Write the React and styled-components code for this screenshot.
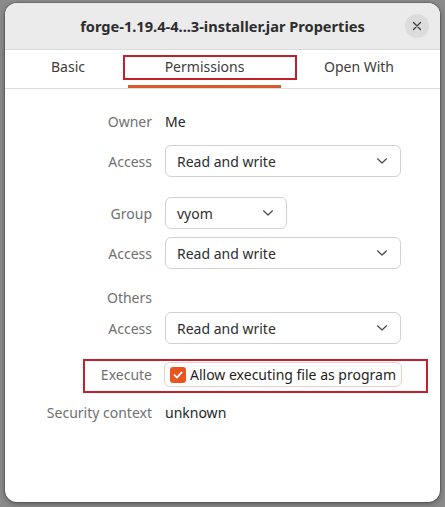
import React, { useState } from 'react';
import styled, { createGlobalStyle } from 'styled-components';

const GlobalStyle = createGlobalStyle`
    html, body {
        margin: 0;
        padding: 0;
        background: #8b8b8b;
        font-family: "Noto Sans", "Open Sans", sans-serif;
    }
`;

const Desktop = styled.div`
    width: 445px;
    height: 507px;
    padding: 3px 5px 5px 5px;
    box-sizing: border-box;
`;

const Window = styled.div`
    width: 435px;
    height: 499px;
    background: #ffffff;
    border-radius: 12px;
    overflow: hidden;
    display: flex;
    flex-direction: column;
    box-shadow: 0 0 0 1px rgba(0, 0, 0, 0.18), 0 2px 6px rgba(0, 0, 0, 0.35);
`;

const HeaderBar = styled.div`
    height: 46px;
    flex: none;
    background: #ebebeb;
    border-bottom: 1px solid #d9d9d9;
    display: grid;
    grid-template-columns: 1fr auto 1fr;
    align-items: center;
`;

const Title = styled.div`
    grid-column: 2;
    font-size: 14.6px;
    font-weight: 700;
    color: #2d2d2d;
`;

const CloseButton = styled.button`
    grid-column: 3;
    justify-self: end;
    margin-right: 11px;
    width: 24px;
    height: 24px;
    border-radius: 50%;
    border: none;
    background: #dcdcdc;
    color: #3a3a3a;
    display: flex;
    align-items: center;
    justify-content: center;
    padding: 0;
`;

const TabBar = styled.div`
    height: 38px;
    flex: none;
    border-bottom: 1px solid #dddddd;
    display: grid;
    grid-template-columns: 108px 153px 144px;
    column-gap: 6px;
    padding-left: 9px;
`;

const Tab = styled.div`
    position: relative;
    display: flex;
    align-items: center;
    justify-content: center;
    font-size: 14px;
    color: #3c3c3c;
    padding-bottom: 2px;

    &::before {
        content: '';
        position: absolute;
        left: 0;
        right: 0;
        bottom: 0;
        height: 3px;
        background: ${p => (p.$active ? '#d45a2a' : 'transparent')};
    }
`;

/* red annotation frame drawn over the selected tab */
const TabMark = styled.span`
    position: absolute;
    left: -5px;
    right: -16px;
    top: 5px;
    height: 25px;
    border: 2px solid #c4202c;
    box-sizing: border-box;
    pointer-events: none;
`;

const TabText = styled.span`
    position: relative;
    top: -2px;
`;

const Content = styled.div`
    padding: 20px 0 0 0;
    display: flex;
    flex-direction: column;
`;

const Row = styled.div`
    position: relative;
    display: grid;
    grid-template-columns: 147px auto;
    column-gap: 13px;
    align-items: center;
    height: ${p => p.$h || 24}px;
    margin-top: ${p => p.$gap || 0}px;
`;

const Label = styled.div`
    justify-self: end;
    font-size: 14px;
    color: #707070;
`;

const Value = styled.div`
    font-size: 14px;
    color: #262626;
`;

const Combo = styled.div`
    width: ${p => p.$w}px;
    height: 32px;
    box-sizing: border-box;
    border: 1px solid #d2d2d2;
    border-radius: 6px;
    display: flex;
    align-items: center;
    justify-content: space-between;
    padding: 0 12px 0 11px;
    font-size: 14px;
    color: #2e2e2e;
    background: #ffffff;
`;

const CheckButton = styled.label`
    height: 25px;
    box-sizing: border-box;
    border: 1px solid #ead0c6;
    border-radius: 6px;
    margin-left: -1px;
    display: inline-flex;
    align-items: center;
    gap: 4px;
    padding: 0 5px 0 5px;
    font-size: 14px;
    color: #1f1f1f;
    cursor: pointer;
    justify-self: start;
`;

const Box = styled.span`
    width: 16px;
    height: 16px;
    border-radius: 3px;
    background: ${p => (p.$on ? '#e95420' : '#ffffff')};
    border: ${p => (p.$on ? 'none' : '1px solid #9a9a9a')};
    box-sizing: border-box;
    display: flex;
    align-items: center;
    justify-content: center;
`;

/* red annotation frame around the execute row */
const RowMark = styled.span`
    position: absolute;
    left: 78px;
    right: 12px;
    top: -3px;
    bottom: -6px;
    border: 2px solid #c4202c;
    box-sizing: border-box;
    pointer-events: none;
`;

const Chevron = () => (
    <svg width="12" height="8" viewBox="0 0 12 8" fill="none">
        <path d="M1.5 1.8 L6 6 L10.5 1.8" stroke="#4a4a4a" strokeWidth="1.2" strokeLinecap="round" strokeLinejoin="round" />
    </svg>
);

const Select = ({ value, width }) => (
    <Combo $w={width}>
        <span>{value}</span>
        <Chevron />
    </Combo>
);

const App = () => {
    const [exec, setExec] = useState(true);

    return (
        <>
            <GlobalStyle />
            <Desktop>
                <Window>
                    <HeaderBar>
                        <Title>forge-1.19.4-4...3-installer.jar Properties</Title>
                        <CloseButton aria-label="Close">
                            <svg width="10" height="10" viewBox="0 0 10 10">
                                <path d="M1.5 1.5 L8.5 8.5 M8.5 1.5 L1.5 8.5" stroke="#3c3c3c" strokeWidth="1.3" strokeLinecap="round" />
                            </svg>
                        </CloseButton>
                    </HeaderBar>

                    <TabBar>
                        <Tab><TabText>Basic</TabText></Tab>
                        <Tab $active>
                            <TabText>Permissions</TabText>
                            <TabMark />
                        </Tab>
                        <Tab><TabText>Open With</TabText></Tab>
                    </TabBar>

                    <Content>
                        <Row>
                            <Label>Owner</Label>
                            <Value>Me</Value>
                        </Row>
                        <Row $h={32} $gap={12}>
                            <Label>Access</Label>
                            <Select value="Read and write" width={236} />
                        </Row>

                        <Row $h={32} $gap={20}>
                            <Label>Group</Label>
                            <Select value="vyom" width={122} />
                        </Row>
                        <Row $h={32} $gap={8}>
                            <Label>Access</Label>
                            <Select value="Read and write" width={236} />
                        </Row>

                        <Row $gap={16}>
                            <Label>Others</Label>
                        </Row>
                        <Row $h={32} $gap={3}>
                            <Label>Access</Label>
                            <Select value="Read and write" width={236} />
                        </Row>

                        <Row $h={25} $gap={18}>
                            <Label>Execute</Label>
                            <CheckButton onClick={() => setExec(v => !v)}>
                                <Box $on={exec}>
                                    {exec && (
                                        <svg width="12" height="12" viewBox="0 0 12 12" fill="none">
                                            <path d="M2.5 6.2 L5 8.6 L9.6 3.4" stroke="#ffffff" strokeWidth="1.8" strokeLinecap="round" strokeLinejoin="round" />
                                        </svg>
                                    )}
                                </Box>
                                Allow executing file as program
                            </CheckButton>
                            <RowMark />
                        </Row>

                        <Row $gap={13}>
                            <Label>Security context</Label>
                            <Value>unknown</Value>
                        </Row>
                    </Content>
                </Window>
            </Desktop>
        </>
    );
};

export default App;
